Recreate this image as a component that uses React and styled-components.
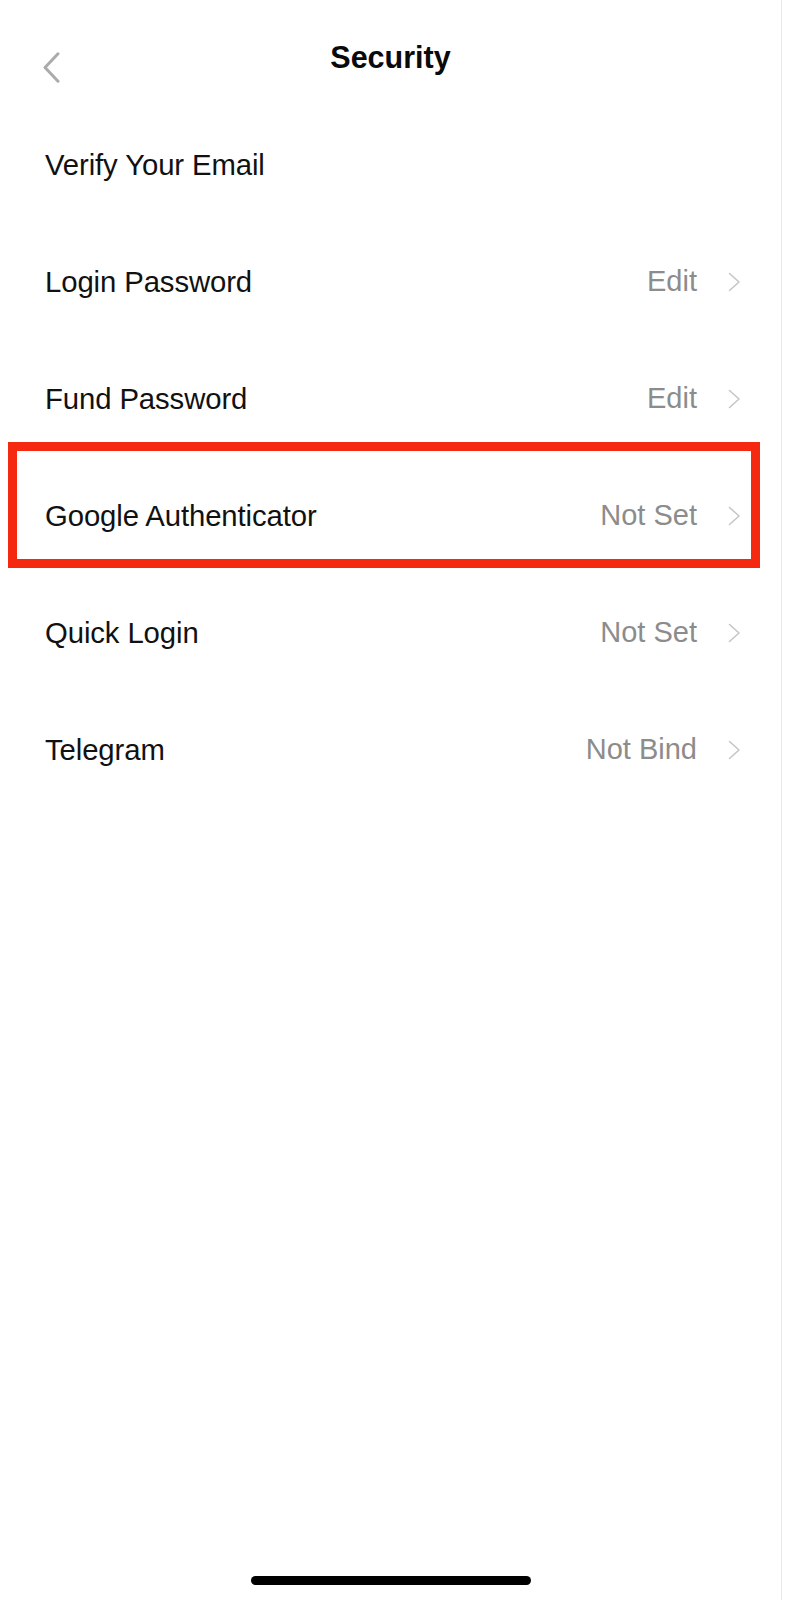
import styled, { createGlobalStyle } from "styled-components";

const GlobalStyle = createGlobalStyle`
  html, body {
    margin: 0;
    padding: 0;
    background: #ffffff;
  }
  body {
    font-family: "Liberation Sans", Arial, Helvetica, sans-serif;
    -webkit-font-smoothing: antialiased;
  }
`;

const items = [
  { label: "Verify Your Email" },
  { label: "Login Password", value: "Edit" },
  { label: "Fund Password", value: "Edit" },
  { label: "Google Authenticator", value: "Not Set", marked: true },
  { label: "Quick Login", value: "Not Set" },
  { label: "Telegram", value: "Not Bind" },
];

export default function App() {
  return (
    <>
      <GlobalStyle />
      <Page>
        <Header>
          <BackButton aria-label="Back">
            <svg width="17" height="31" viewBox="0 0 17 31" fill="none">
              <path
                d="M15 1.8 L2 15.5 L15 29.2"
                stroke="#ababab"
                strokeWidth="3"
                strokeLinecap="round"
                strokeLinejoin="round"
              />
            </svg>
          </BackButton>
          <Title>Security</Title>
          <span />
        </Header>

        <List>
          {items.map((item) => (
            <Row key={item.label} marked={item.marked}>
              <Label>{item.label}</Label>
              {item.value && (
                <Right>
                  <Value>{item.value}</Value>
                  <svg width="13" height="20" viewBox="0 0 13 20" fill="none">
                    <path
                      d="M1.5 1.5 L11 10 L1.5 18.5"
                      stroke="#c6c6c6"
                      strokeWidth="1.6"
                      strokeLinecap="round"
                      strokeLinejoin="round"
                    />
                  </svg>
                </Right>
              )}
            </Row>
          ))}
        </List>

        <HomeBar />
      </Page>
    </>
  );
}

const Page = styled.div`
  width: 782px;
  min-height: 1600px;
  border-right: 1px solid #e9e9e9;
  display: flex;
  flex-direction: column;
  box-sizing: border-box;
`;

const Header = styled.div`
  height: 106px;
  box-sizing: border-box;
  padding-top: 39px;
  display: grid;
  grid-template-columns: 1fr auto 1fr;
  align-items: start;
`;

const BackButton = styled.button`
  justify-self: start;
  margin: 13px 0 0 43px;
  padding: 0;
  border: none;
  background: none;
  display: flex;
`;

const Title = styled.h1`
  margin: 0;
  font-size: 30.5px;
  line-height: 36px;
  font-weight: 700;
  color: #0a0a0a;
`;

const List = styled.div`
  display: flex;
  flex-direction: column;
`;

const Row = styled.div`
  position: relative;
  height: 117px;
  padding: 0 40px 0 45px;
  display: flex;
  align-items: center;
  justify-content: space-between;

  &::after {
    content: "";
    display: ${(p) => (p.marked ? "block" : "none")};
    position: absolute;
    top: -15px;
    bottom: 6px;
    left: 8px;
    right: 21px;
    border: 9px solid #f4290f;
    pointer-events: none;
  }
`;

const Label = styled.span`
  font-size: 29.3px;
  color: #111111;
  letter-spacing: -0.1px;
`;

const Right = styled.div`
  display: flex;
  align-items: center;
  gap: 31px;
`;

const Value = styled.span`
  font-size: 29px;
  color: #8c8c8c;
`;

const HomeBar = styled.div`
  margin-top: auto;
  margin-bottom: 15px;
  align-self: center;
  width: 280px;
  height: 9px;
  border-radius: 5px;
  background: #000000;
`;
